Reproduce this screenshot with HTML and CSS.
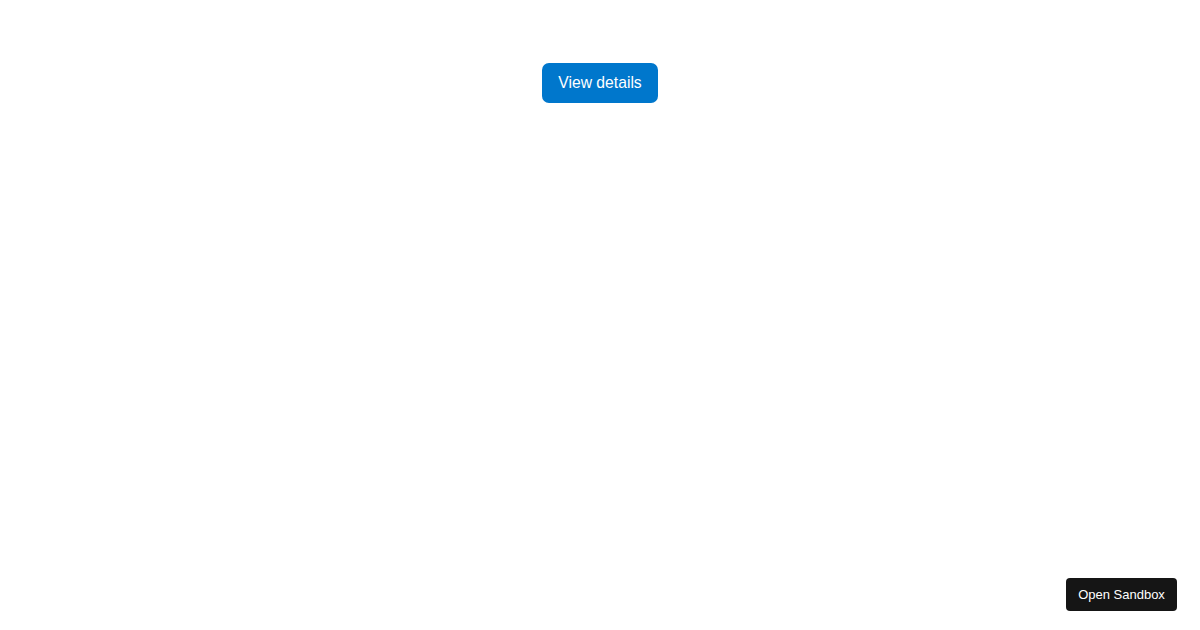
FILE: index.html
```html
<!DOCTYPE html>
<html>
<head>
<meta charset="utf-8">
<link rel="stylesheet" href="styles.css">
</head>
<body>
<main class="page">
  <button class="primary-btn">View details</button>
</main>
<a class="sandbox-btn">Open Sandbox</a>
</body>
</html>
```
FILE: styles.css
```css
html, body {
  margin: 0;
  padding: 0;
  background: #ffffff;
  font-family: "Liberation Sans", Arial, sans-serif;
}
.page {
  display: flex;
  justify-content: center;
  padding-top: 63px;
}
.primary-btn {
  box-sizing: border-box;
  font-family: "Liberation Sans", Arial, sans-serif;
  font-size: 15.7px;
  line-height: 19px;
  white-space: nowrap;
  color: #ffffff;
  background: #0077cc;
  border: none;
  border-radius: 7px;
  padding: 0 0 1px;
  width: 116px;
  height: 40px;
  cursor: pointer;
}
.sandbox-btn {
  position: fixed;
  right: 23px;
  bottom: 19px;
  width: 111px;
  height: 33px;
  box-sizing: border-box;
  display: flex;
  align-items: center;
  justify-content: center;
  background: #151515;
  color: #ffffff;
  font-size: 13px;
  border-radius: 4px;
}
```
